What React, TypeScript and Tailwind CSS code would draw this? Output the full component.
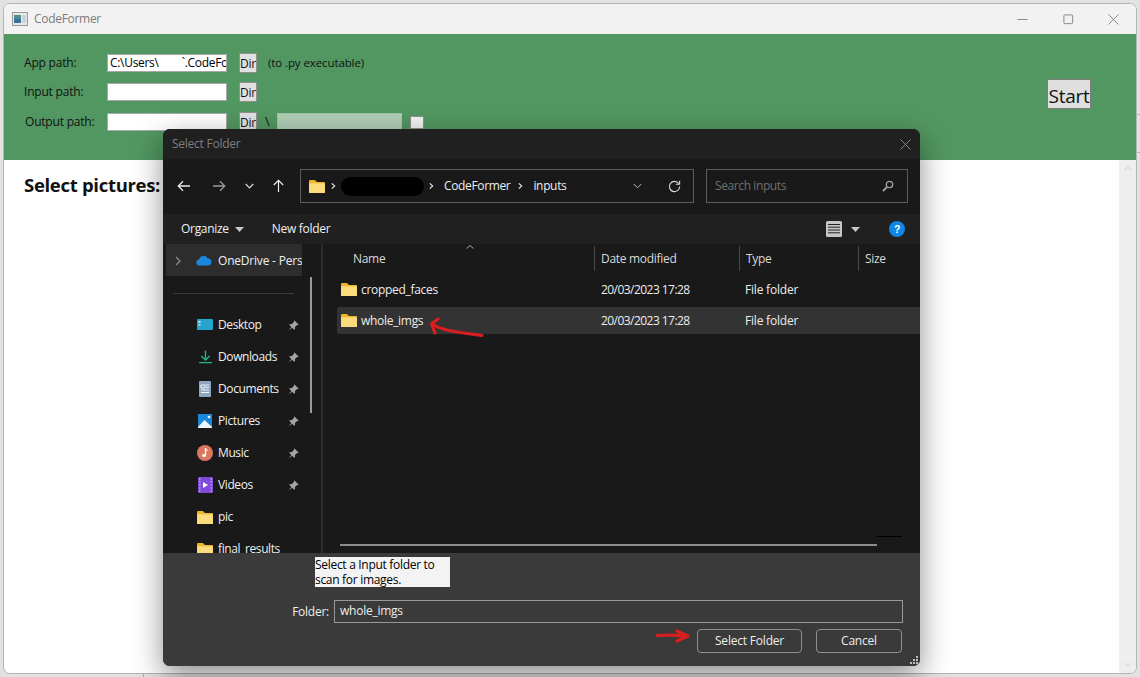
const FONT = "font-['Open_Sans','Noto_Sans',sans-serif]";

function Folder({ className = "" }: { className?: string }) {
  return (
    <svg viewBox="0 0 16 13" className={"w-4 h-[13px] shrink-0 " + className}>
      <path d="M0 1.2C0 .5.5 0 1.2 0h4.2c.4 0 .7.1 1 .4L8 2h6.8c.7 0 1.2.5 1.2 1.2V12c0 .6-.5 1-1.2 1H1.2C.5 13 0 12.6 0 12Z" fill="#f0b429" />
      <path d="M0 4.2c0-.6.4-1 1-1h14c.6 0 1 .4 1 1V12c0 .6-.5 1-1.2 1H1.2C.5 13 0 12.6 0 12Z" fill="#fbdc7c" />
    </svg>
  );
}

function Pin() {
  return (
    <svg viewBox="0 0 12 12" className="w-[11px] h-[11px]">
      <path d="M7 .5 11.5 5 10.6 5.8 9.8 5.5 7.6 7.7 7.5 10 6.6 10.6 1.4 5.4 2 4.5 4.3 4.4 6.5 2.2 6.2 1.4Z" fill="#a4a4a4" />
      <path d="M3.6 7.6.6 11.4 4.4 8.4Z" fill="#a4a4a4" />
    </svg>
  );
}

function Chevron({ className = "" }: { className?: string }) {
  return (
    <svg viewBox="0 0 6 8" className={"w-[5px] h-[8px] shrink-0 " + className}>
      <path d="M1 .8 4.4 4 1 7.2" fill="none" stroke="#e6e6e6" strokeWidth="1.4" />
    </svg>
  );
}

function Caret({ color = "#c8c8c8" }: { color?: string }) {
  return (
    <svg viewBox="0 0 9 5" className="w-[9px] h-[5px]">
      <path d="M0 0h9L4.5 5Z" fill={color} />
    </svg>
  );
}

function NavItem({ icon, label, pin = true }: { icon: React.ReactNode; label: string; pin?: boolean }) {
  return (
    <div className="h-8 flex items-center shrink-0 relative">
      <div className="w-4 flex justify-center ml-[33px] shrink-0">{icon}</div>
      <span className="ml-[5px] text-[12px] text-[#f0f0f0] leading-none tracking-[-0.4px] whitespace-nowrap">{label}</span>
      <div className="flex-1" />
      {pin && <div className="mr-[3px] flex"><Pin /></div>}
    </div>
  );
}

function Row({ label, lx, className = "", children }: { label: string; lx: string; className?: string; children?: React.ReactNode }) {
  return (
    <div className={"flex items-center h-5 " + className}>
      <span className={"w-[83px] text-[12px] text-[#111] tracking-[-0.2px] " + lx}>{label}</span>
      {children}
    </div>
  );
}

function PathInput({ children }: { children?: React.ReactNode }) {
  return (
    <div className="w-[120px] h-[18px] bg-white border border-[#a8a8a8] text-[12px] leading-[16px] pl-[2px] overflow-hidden whitespace-nowrap tracking-[-0.3px] text-black">
      {children}
    </div>
  );
}

function DirBtn() {
  return (
    <div className="ml-3 w-[18px] h-5 bg-[#e1e1e1] border border-[#8f8f8f] text-[12px] leading-[19px] text-[#111] overflow-hidden flex justify-center tracking-[-0.2px] whitespace-nowrap">
      Dir
    </div>
  );
}

function FileRow({ name, selected }: { name: string; selected?: boolean }) {
  return (
    <div className={"flex items-center text-[12px] text-[#ededed] " + (selected ? "h-[27px] bg-[#333333] mt-[3px] rounded-l-[2px]" : "h-[29px]")}>
      <div className="w-[260px] ml-[4px] flex items-center gap-1 tracking-[-0.3px]">
        <Folder />
        <span>{name}</span>
      </div>
      <span className="w-[144px] tracking-[-0.55px]">20/03/2023 17:28</span>
      <span className="tracking-[-0.2px]">File folder</span>
    </div>
  );
}

export default function App() {
  return (
    <div className={"w-[1140px] h-[677px] bg-[#e2e2e2] overflow-hidden relative pt-[3px] px-[3px] pb-[3px] " + FONT}>
      {/* main window */}
      <div className="h-full w-full flex flex-col bg-white border border-[#b4b4b4] rounded-[7px] overflow-hidden">
        <div className="h-[30px] bg-[#f2f2f2] flex items-center shrink-0 pl-[8px]">
          <svg viewBox="0 0 16 14" className="w-4 h-[14px]">
            <rect x=".5" y=".5" width="15" height="13" fill="#e8e8e8" stroke="#9a9a9a" />
            <rect x="2" y="3" width="7" height="8" fill="#4c8f8f" />
            <rect x="2" y="7" width="7" height="4" fill="#3d6f9f" />
            <rect x="10" y="3" width="4" height="8" fill="#c9d4dc" />
          </svg>
          <span className="ml-[6px] text-[12px] text-[#7b7b7b] tracking-[-0.3px]">CodeFormer</span>
          <div className="flex-1" />
          <svg viewBox="0 0 12 12" className="w-[11px] h-[11px] mr-[35px]"><path d="M.5 6h11" stroke="#808080" /></svg>
          <svg viewBox="0 0 12 12" className="w-[11px] h-[11px] mr-[34px]"><rect x="1" y="1" width="9.5" height="9.5" rx="1" fill="none" stroke="#808080" /></svg>
          <svg viewBox="0 0 12 12" className="w-[11px] h-[11px] mr-[17px]"><path d="M.5.5l11 11M11.5.5l-11 11" stroke="#808080" /></svg>
        </div>
        <div className="h-[126px] bg-[#529761] flex shrink-0 pl-5 pt-[19px]">
          <div className="flex flex-col flex-1">
            <Row label="App path:" lx="">
              <PathInput>C:\Users\<span className="ml-[23px]">`.CodeFo</span></PathInput>
              <DirBtn />
              <span className="ml-[11px] text-[11.5px] text-[#111] tracking-[-0.1px]">(to .py executable)</span>
            </Row>
            <Row label="Input path:" lx="" className="mt-[9px]">
              <PathInput />
              <DirBtn />
            </Row>
            <Row label="Output path:" lx="pl-px" className="mt-[10px]">
              <PathInput />
              <DirBtn />
              <span className="ml-2 text-[13px] text-[#111]">\</span>
              <div className="ml-[7px] w-[125px] h-[18px] bg-[#b1cfb7] border border-[#a2c4a9]" />
              <div className="ml-2 w-[14px] h-[13px] bg-[#f3f3f3] border border-[#8f8f8f] rounded-[1px]" />
            </Row>
          </div>
          <div className="w-[44px] h-[30px] mt-[26px] mr-[45px] bg-[#dfdfdf] border border-[#7d7d7d] text-[19px] leading-[33px] text-[#111] flex justify-center tracking-[-0.3px]">
            Start
          </div>
        </div>
        <div className="flex-1 flex min-h-0">
          <div className="flex-1 pl-5 pt-[12px]">
            <div className="text-[18.5px] font-bold text-[#111] leading-[26px] tracking-[-0.3px]">Select pictures:</div>
          </div>
          <div className="w-[17px] bg-[#eeeeee] flex flex-col items-center justify-between py-[6px]">
            <svg viewBox="0 0 10 6" className="w-[8px] h-[5px]"><path d="M1 5l4-4 4 4" fill="none" stroke="#c6c6c6" /></svg>
            <svg viewBox="0 0 10 6" className="w-[8px] h-[5px]"><path d="M1 1l4 4 4-4" fill="none" stroke="#c6c6c6" /></svg>
          </div>
        </div>
      </div>

      {/* Select Folder dialog */}
      <div className="absolute left-[163px] top-[129px] w-[757px] h-[537px] rounded-[7px] overflow-hidden bg-[#191919] flex flex-col shadow-[0_10px_30px_rgba(0,0,0,0.45)]">
        <div className="h-[30px] shrink-0 bg-[#202020] flex items-center pl-[9px] pr-[9px]">
          <span className="text-[12px] text-[#7e7e7e] tracking-[-0.25px]">Select Folder</span>
          <div className="flex-1" />
          <svg viewBox="0 0 12 12" className="w-[11px] h-[11px]"><path d="M.5.5l11 11M11.5.5l-11 11" stroke="#8c8c8c" /></svg>
        </div>

        <div className="h-[55px] shrink-0 bg-[#191919] flex items-center pb-[1px]">
          <div className="flex items-center h-[34px] w-[137px] shrink-0 relative">
            <svg viewBox="0 0 14 12" className="w-[14px] h-[12px] ml-[14px]"><path d="M13 6H1.500M6 1.300 1.300 6 6 10.700" fill="none" stroke="#ececec" strokeWidth="1.3" /></svg>
            <svg viewBox="0 0 14 12" className="w-[14px] h-[12px] ml-[21px]"><path d="M1 6h11.500M8 1.300 12.700 6 8 10.700" fill="none" stroke="#9a9a9a" strokeWidth="1.3" /></svg>
            <svg viewBox="0 0 10 6" className="w-[9px] h-[6px] ml-[19px]"><path d="M.8.8 5 5 9.200.8" fill="none" stroke="#dcdcdc" strokeWidth="1.3" /></svg>
            <svg viewBox="0 0 12 14" className="w-[13px] h-[14px] ml-[18px]"><path d="M6 13V1.500M1.300 6 6 1.300 10.700 6" fill="none" stroke="#ececec" strokeWidth="1.2" /></svg>
          </div>
          <div className="w-[394px] h-[34px] border border-[#5c5c5c] flex items-center pl-2 pr-[12px] text-[12px] text-[#ededed] tracking-[-0.35px]">
            <Folder className="mr-[6px]" />
            <Chevron />
            <div className="ml-[5px] w-[83px] h-[19px] bg-black rounded-full shrink-0" />
            <Chevron className="ml-[5px]" />
            <span className="ml-[10px]">CodeFormer</span>
            <Chevron className="ml-[8px]" />
            <span className="ml-[10px]">inputs</span>
            <div className="flex-1" />
            <svg viewBox="0 0 10 6" className="w-[9px] h-[6px]"><path d="M.8.8 5 5 9.200.8" fill="none" stroke="#cfcfcf" /></svg>
            <svg viewBox="0 0 14 14" className="w-[13px] h-[13px] ml-[26px]"><path d="M11.600 4A5.500 5.500 0 1 0 12.500 7" fill="none" stroke="#d8d8d8" strokeWidth="1.2" /><path d="M8.500 4.600h4V.8" fill="none" stroke="#d8d8d8" strokeWidth="1.2" /></svg>
          </div>
          <div className="ml-3 w-[202px] h-[34px] border border-[#5c5c5c] flex items-center pl-2 pr-[13px] text-[12px] text-[#6f6f6f] tracking-[-0.4px]">
            <span>Search inputs</span>
            <div className="flex-1" />
            <svg viewBox="0 0 12 12" className="w-[12px] h-[12px]"><circle cx="7.500" cy="4.500" r="3.200" fill="none" stroke="#a0a0a0" strokeWidth="1.3" /><path d="M5 7 1 11" stroke="#a0a0a0" strokeWidth="1.8" /></svg>
          </div>
        </div>

        <div className="h-[30px] shrink-0 bg-[#202020] flex items-center text-[12px] text-[#efefef] pl-[18px] tracking-[-0.3px]">
          <span>Organize</span>
          <span className="ml-[6px] flex"><Caret /></span>
          <span className="ml-[28px]">New folder</span>
          <div className="flex-1" />
          <svg viewBox="0 0 16 16" className="w-[16px] h-[16px]">
            <rect width="16" height="16" rx="1.500" fill="#c6c6c6" />
            <path d="M2 3.500h12M2 6.200h12M2 9h12M2 11.800h12" stroke="#222" strokeWidth="1" />
          </svg>
          <span className="ml-[9px] flex"><Caret /></span>
          <svg viewBox="0 0 16 16" className="w-4 h-4 ml-[29px] mr-[15px]">
            <circle cx="8" cy="8" r="8" fill="#0f85e4" />
            <text x="8" y="11.700" textAnchor="middle" fontSize="10.500" fontWeight="700" fill="#fff" fontFamily="Liberation Sans, sans-serif">?</text>
          </svg>
        </div>

        <div className="flex-1 min-h-0 flex relative overflow-hidden">
          {/* nav pane */}
          <div className="w-[158px] shrink-0 flex pl-px">
            <div className="w-[138px] shrink-0 flex flex-col overflow-hidden">
              <div className="h-8 shrink-0 bg-[#2d2d2d] flex items-center ml-[2px] pt-px">
                <svg viewBox="0 0 6 10" className="w-[6px] h-[10px] ml-[9px] shrink-0"><path d="M1 1l4 4-4 4" fill="none" stroke="#8c8c8c" strokeWidth="1.3" /></svg>
                <svg viewBox="0 0 16 11" className="w-4 h-[11px] ml-[15px] shrink-0"><path d="M3.500 10.500a3 3 0 0 1-.4-6 4.500 4.500 0 0 1 8.400-1.200 3.600 3.600 0 0 1 4 3.700c0 2-1.400 3.500-3.500 3.500Z" fill="#1a86dc" /></svg>
                <span className="ml-[6px] text-[12px] text-[#efefef] whitespace-nowrap tracking-[-0.2px]">OneDrive - Pers</span>
              </div>
              <div className="h-px bg-[#3a3a3a] mx-[9px] mt-[17px] mb-[15px] shrink-0 w-[121px]" />
              <NavItem label="Desktop" icon={<svg viewBox="0 0 16 12" className="w-4 h-3"><rect width="16" height="11" rx="1" fill="#27a3d0" /><rect x="1.500" y="2" width="2" height="1.500" fill="#fff" /><rect x="1.500" y="5" width="2" height="1.500" fill="#cde" /></svg>} />
              <NavItem label="Downloads" icon={<svg viewBox="0 0 14 14" className="w-[13px] h-[14px]"><path d="M7 0v10M2.500 5.800 7 10.300l4.500-4.500M0 13h14" fill="none" stroke="#1fb68f" strokeWidth="1.500" /></svg>} />
              <NavItem label="Documents" icon={<svg viewBox="0 0 12 16" className="w-3 h-4"><rect width="12" height="16" rx="1" fill="#8ea6bf" /><path d="M2 4h4v3H2zM7 4h3M7 6.500h3M2 9h8M2 11.500h8" stroke="#f0f4f8" strokeWidth="1" fill="none" /></svg>} />
              <NavItem label="Pictures" icon={<svg viewBox="0 0 14 14" className="w-[14px] h-[14px]"><rect width="14" height="14" fill="#1b87d8" /><path d="M0 13 6.500 6l7.500 7v1H0Z" fill="#eef6fc" /><circle cx="11" cy="3" r="1.300" fill="#fff" /></svg>} />
              <NavItem label="Music" icon={<svg viewBox="0 0 16 16" className="w-4 h-4"><circle cx="8" cy="8" r="8" fill="#d9775f" /><path d="M8.500 3v7" stroke="#fff" strokeWidth="1.300" /><ellipse cx="7" cy="10.500" rx="2" ry="1.600" fill="#fff" /><path d="M8.500 3c0 1.500 2 1.500 2 3" fill="none" stroke="#fff" /></svg>} />
              <NavItem label="Videos" icon={<svg viewBox="0 0 15 16" className="w-[15px] h-4"><rect width="15" height="16" rx="1" fill="#7e4bd6" /><path d="M5 5v6l5-3Z" fill="#fff" /><path d="M1 2h1.500M1 5h1.500M1 8h1.500M1 11h1.500M1 14h1.500M12.500 2H14M12.500 5H14M12.500 8H14M12.500 11H14M12.500 14H14" stroke="#d9c8f5" /></svg>} />
              <NavItem label="pic" pin={false} icon={<Folder />} />
              <NavItem label="final_results" pin={false} icon={<Folder />} />
            </div>
            <div className="w-[19px] shrink-0 relative">
              <div className="absolute left-[8px] top-[33px] w-[2px] h-[136px] bg-[#9a9a9a]" />
            </div>
          </div>
          <div className="w-[2px] shrink-0 bg-[#2b2b2b]" />

          {/* file list */}
          <div className="flex-1 min-w-0 flex flex-col pl-[14px] overflow-hidden relative">
            <div className="h-[25px] mt-[2px] shrink-0 flex items-center text-[12px] text-[#d8d8d8] tracking-[-0.3px] relative">
              <span className="w-[257px] pl-[16px]">Name</span>
              <span className="w-px h-[25px] bg-[#4a4a4a]" />
              <span className="w-[144px] pl-[6px]">Date modified</span>
              <span className="w-px h-[25px] bg-[#4a4a4a]" />
              <span className="w-[118px] pl-[6px]">Type</span>
              <span className="w-px h-[25px] bg-[#4a4a4a]" />
              <span className="pl-[6px]">Size</span>
              <svg viewBox="0 0 8 4" className="absolute left-[129px] -top-[1px] w-2 h-1"><path d="M.5 3.500 4 .5l3.500 3" fill="none" stroke="#a8a8a8" /></svg>
            </div>
            <div className="mt-[4px] shrink-0">
              <FileRow name="cropped_faces" />
              <FileRow name="whole_imgs" selected />
            </div>
            <div className="absolute left-[17px] top-[300px] w-[537px] h-[2px] bg-[#8c8c8c]" />
            <div className="absolute left-[554px] top-[292px] w-[25px] h-px bg-black" />
          </div>
        </div>

        {/* footer */}
        <div className="h-[113px] shrink-0 bg-[#3a3a3a] flex flex-col items-end pr-[17px] relative">
          <div className="mt-[47px] flex items-center text-[12px] text-[#ededed] tracking-[-0.25px]">
            <span className="mr-[5px]">Folder:</span>
            <div className="w-[569px] h-[23px] border border-[#989898] pl-[5px] leading-[19px]">whole_imgs</div>
          </div>
          <div className="mt-[6px] flex gap-[14px] pr-px text-[12px] text-[#ededed] tracking-[-0.2px]">
            <div className="w-[105px] h-[24px] border border-[#909090] rounded-[4px] flex items-center justify-center">Select Folder</div>
            <div className="w-[86px] h-[24px] border border-[#909090] rounded-[4px] flex items-center justify-center">Cancel</div>
          </div>
          <svg viewBox="0 0 8 8" className="absolute right-[2px] bottom-[2px] w-2 h-2">
            <path d="M6 0h2v2H6zM3 3h2v2H3zM6 3h2v2H6zM0 6h2v2H0zM3 6h2v2H3zM6 6h2v2H6z" fill="#bdbdbd" />
          </svg>
          <div className="absolute left-[152px] top-[4px] w-[135px] h-[30px] bg-[#f3f3f3] text-[12px] leading-[15px] text-black tracking-[-0.3px]">
            Select a Input folder to scan for images.
          </div>
        </div>
      </div>

      {/* red annotations */}
      <svg viewBox="0 0 60 24" className="absolute left-[428px] top-[316px] w-[60px] h-[24px]">
        <path d="M4 8 C14 15 34 17 54 19.500 M10 3 L3.500 8 L7 17" fill="none" stroke="#d81e1e" strokeWidth="3.200" strokeLinecap="round" strokeLinejoin="round" />
      </svg>
      <svg viewBox="0 0 36 16" className="absolute left-[655px] top-[628px] w-[36px] h-[16px]">
        <path d="M2 7.500C10 7 20 7 31 8M22 3 33 8 22 13" fill="none" stroke="#d81e1e" strokeWidth="3.200" strokeLinecap="round" strokeLinejoin="round" />
      </svg>
      {/* background window peeking out at the edges */}
      <div className="absolute left-[143px] top-[673px] w-px h-[4px] bg-[#a8a8a8]" />
      <div className="absolute right-0 top-[114px] w-[3px] h-px bg-[#b8b8b8]" />
      <div className="absolute right-0 top-[152px] w-[3px] h-px bg-[#b8b8b8]" />
    </div>
  );
}
